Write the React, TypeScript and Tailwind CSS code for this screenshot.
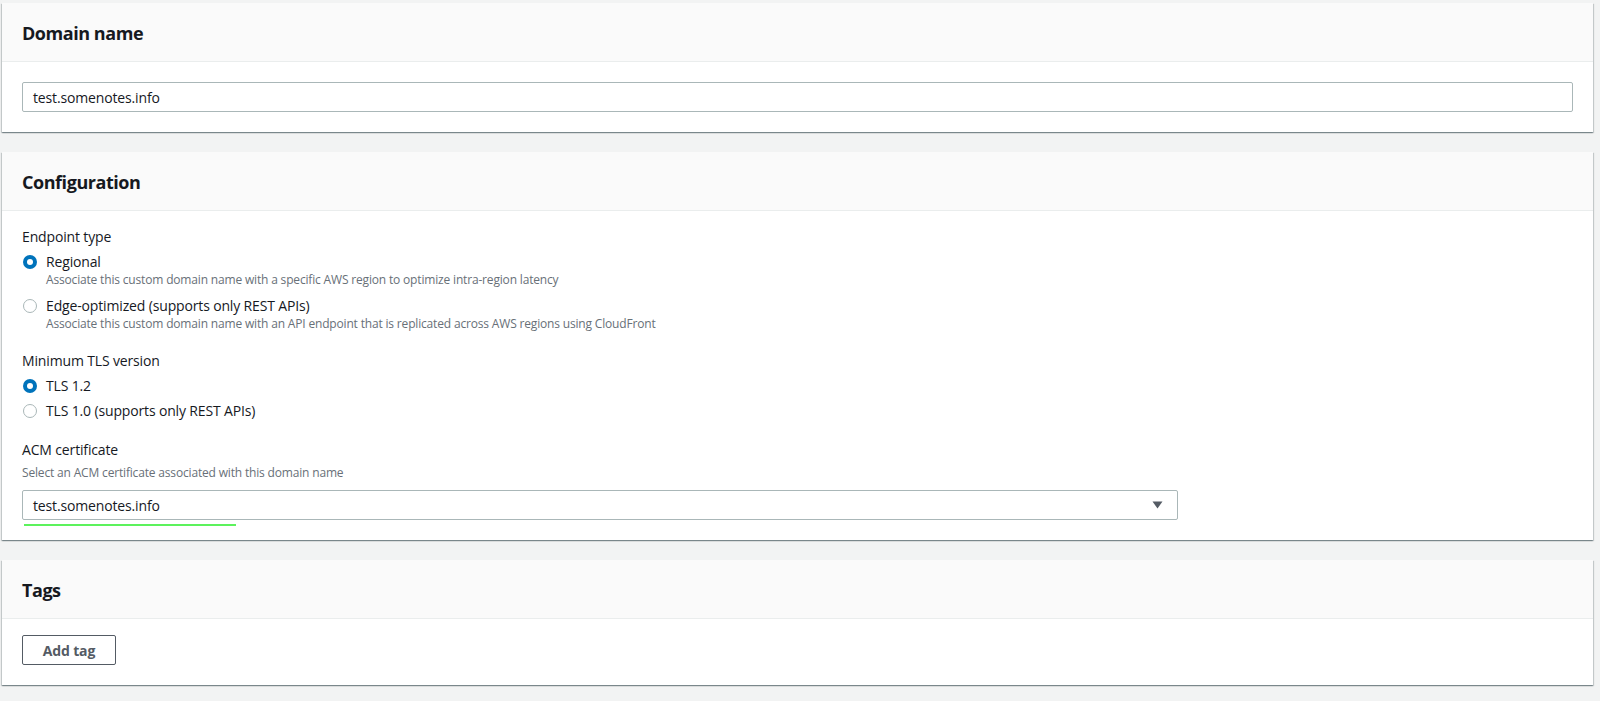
import React from "react";

const font = { fontFamily: '"Open Sans", "Noto Sans", Arial, sans-serif' };

function Card({ title, children }: { title: string; children: React.ReactNode }) {
  return (
    <div className="bg-white shadow-[0_1px_1px_0_rgba(0,28,36,0.3),1px_1px_1px_0_rgba(0,28,36,0.15),-1px_1px_1px_0_rgba(0,28,36,0.15)]">
      <div className="h-[59px] bg-[#fafafa] border-b border-[#eaeded] flex items-center px-5">
        <h2 className="text-[18px] leading-[22px] font-bold text-[#16191f] pt-[1px] tracking-[-0.45px]">{title}</h2>
      </div>
      {children}
    </div>
  );
}

function Radio({ checked }: { checked?: boolean }) {
  return checked ? (
    <span className="w-[14px] h-[14px] rounded-full bg-[#0073bb] flex items-center justify-center shrink-0">
      <span className="w-[6px] h-[6px] rounded-full bg-white" />
    </span>
  ) : (
    <span className="w-[14px] h-[14px] rounded-full border border-[#aab7b8] bg-white shrink-0" />
  );
}

function Option({ checked, label, desc }: { checked?: boolean; label: string; desc?: string }) {
  return (
    <div className="flex">
      <div className="w-[24px] h-[20px] flex items-center pl-[1px]">
        <Radio checked={checked} />
      </div>
      <div>
        <div className="text-[14px] leading-[20px] text-[#16191f] tracking-[-0.15px]">{label}</div>
        {desc && <div className="text-[12px] leading-[15px] text-[#687078] tracking-[-0.17px]">{desc}</div>}
      </div>
    </div>
  );
}

export default function App() {
  return (
    <div className="min-h-[701px] bg-[#f2f3f3] pl-[2px] pr-[7px] pt-[3px] flex flex-col gap-[20px]" style={font}>
      <Card title="Domain name">
        <div className="px-5 pt-[20px] pb-[20px]">
          <div className="h-[30px] border border-[#aab7b8] rounded-[2px] flex items-center pl-[10px] text-[14px] text-[#16191f] tracking-[-0.15px]">
            test.somenotes.info
          </div>
        </div>
      </Card>

      <Card title="Configuration">
        <div className="px-5 pt-[16px] pb-[20px] relative">
          <div className="text-[14px] leading-[20px] text-[#16191f] tracking-[-0.15px]">Endpoint type</div>
          <div className="mt-[5px] flex flex-col gap-[9px]">
            <Option
              checked
              label="Regional"
              desc="Associate this custom domain name with a specific AWS region to optimize intra-region latency"
            />
            <Option
              label="Edge-optimized (supports only REST APIs)"
              desc="Associate this custom domain name with an API endpoint that is replicated across AWS regions using CloudFront"
            />
          </div>

          <div className="mt-[20px] text-[14px] leading-[20px] text-[#16191f] tracking-[-0.15px]">Minimum TLS version</div>
          <div className="mt-[5px] flex flex-col gap-[5px]">
            <Option checked label="TLS 1.2" />
            <Option label="TLS 1.0 (supports only REST APIs)" />
          </div>

          <div className="mt-[19px] text-[14px] leading-[20px] text-[#16191f] tracking-[-0.15px]">ACM certificate</div>
          <div className="mt-[5px] text-[12px] leading-[16px] text-[#687078] tracking-[-0.17px]">
            Select an ACM certificate associated with this domain name
          </div>
          <div className="mt-[9px] w-[1156px] h-[30px] border border-[#aab7b8] rounded-[2px] flex items-center justify-between pl-[10px] pr-[14px] text-[14px] text-[#16191f] tracking-[-0.15px]">
            <span>test.somenotes.info</span>
            <svg width="11" height="8" viewBox="0 0 11 8">
              <path d="M0.5 0.5 L10.5 0.5 L5.5 7.5 Z" fill="#545b64" />
            </svg>
          </div>
          <div className="absolute left-[22px] bottom-[14px] w-[212px] h-[2px] bg-[#5cf25c]" />
        </div>
      </Card>

      <Card title="Tags">
        <div className="px-5 pt-[16px] pb-[20px]">
          <button className="w-[94px] h-[30px] border border-[#545b64] rounded-[2px] text-[14px] font-bold text-[#545b64] bg-white tracking-[-0.15px]">
            Add tag
          </button>
        </div>
      </Card>
    </div>
  );
}
